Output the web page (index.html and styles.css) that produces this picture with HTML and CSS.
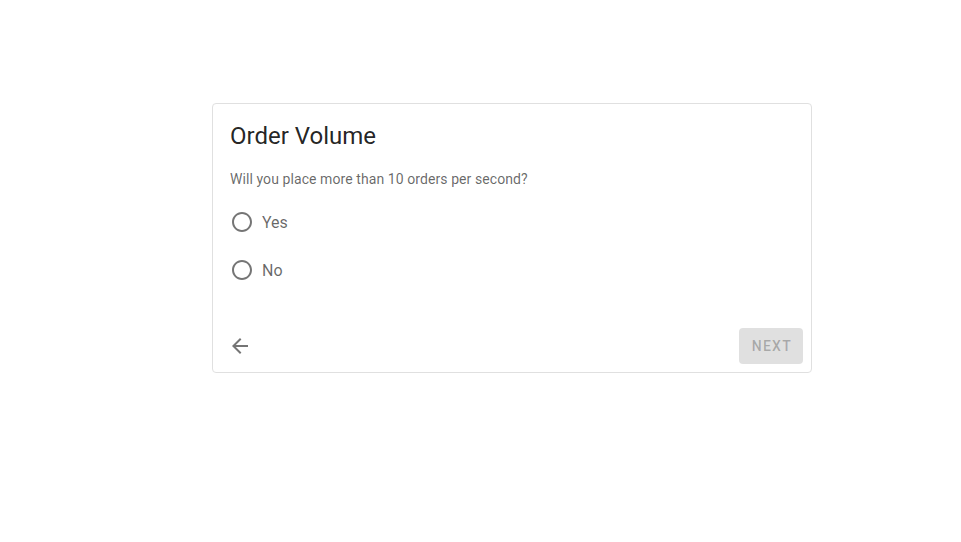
FILE: index.html
```html
<!DOCTYPE html>
<html lang="en">
<head>
  <meta charset="UTF-8">
  <meta name="viewport" content="width=device-width, initial-scale=1.0">
  <title>Order Volume</title>
  <link rel="stylesheet" href="styles.css">
</head>
<body>
  <div class="card">
    <div class="card-content">
      <h2 class="title">Order Volume</h2>
      <p class="question">Will you place more than 10 orders per second?</p>
      <div class="radio-group">
        <label class="radio-row">
          <input type="radio" name="volume" value="yes">
          <svg class="radio-icon" viewBox="0 0 24 24"><path d="M12 2C6.48 2 2 6.48 2 12s4.48 10 10 10 10-4.48 10-10S17.52 2 12 2zm0 18c-4.42 0-8-3.58-8-8s3.58-8 8-8 8 3.58 8 8-3.58 8-8 8z"/></svg>
          <span>Yes</span>
        </label>
        <label class="radio-row">
          <input type="radio" name="volume" value="no">
          <svg class="radio-icon" viewBox="0 0 24 24"><path d="M12 2C6.48 2 2 6.48 2 12s4.48 10 10 10 10-4.48 10-10S17.52 2 12 2zm0 18c-4.42 0-8-3.58-8-8s3.58-8 8-8 8 3.58 8 8-3.58 8-8 8z"/></svg>
          <span>No</span>
        </label>
      </div>
    </div>
    <div class="card-actions">
      <button type="button" class="back-btn" aria-label="Back">
        <svg viewBox="0 0 24 24"><path d="M20 11H7.83l5.59-5.59L12 4l-8 8 8 8 1.41-1.41L7.83 13H20v-2z"/></svg>
      </button>
      <button type="button" class="next-btn" disabled>Next</button>
    </div>
  </div>
</body>
</html>
```

FILE: styles.css
```css
* {
  margin: 0;
  padding: 0;
  box-sizing: border-box;
  font-family: 'Roboto', 'Liberation Sans', sans-serif;
}

body {
  background-color: #fff;
  padding: 103px 0 0 212px;
}

.card {
  width: 600px;
  border: 1px solid #e0e0e0;
  border-radius: 4px;
  background: #fff;
}

.card-content {
  padding: 16px 16px 26px 17px;
}

.title {
  font-size: 24px;
  font-weight: 400;
  line-height: 32px;
  color: rgba(0, 0, 0, 0.87);
  margin-bottom: 17px;
}

.question {
  font-size: 14px;
  line-height: 20px;
  letter-spacing: 0.08px;
  color: rgba(0, 0, 0, 0.6);
  margin-bottom: 9px;
}

.radio-group {
  display: flex;
  flex-direction: column;
}

.radio-row {
  display: flex;
  align-items: center;
  height: 48px;
  cursor: pointer;
  font-size: 16px;
  color: rgba(0, 0, 0, 0.6);
}

.radio-row input {
  display: none;
}

.radio-icon {
  width: 24px;
  height: 24px;
  fill: rgba(0, 0, 0, 0.54);
  margin-right: 8px;
}

.card-actions {
  display: flex;
  align-items: center;
  justify-content: space-between;
  padding: 8px;
}

.back-btn {
  background: none;
  border: none;
  padding: 0 0 0 7px;
  display: flex;
  cursor: pointer;
}

.back-btn svg {
  width: 24px;
  height: 24px;
  fill: rgba(0, 0, 0, 0.54);
}

.next-btn {
  height: 36px;
  min-width: 64px;
  padding: 6px 11px 6px 13px;
  border: none;
  border-radius: 4px;
  background-color: rgba(0, 0, 0, 0.12);
  color: rgba(0, 0, 0, 0.26);
  font-size: 14px;
  font-weight: 500;
  letter-spacing: 1.25px;
  text-transform: uppercase;
}
```
